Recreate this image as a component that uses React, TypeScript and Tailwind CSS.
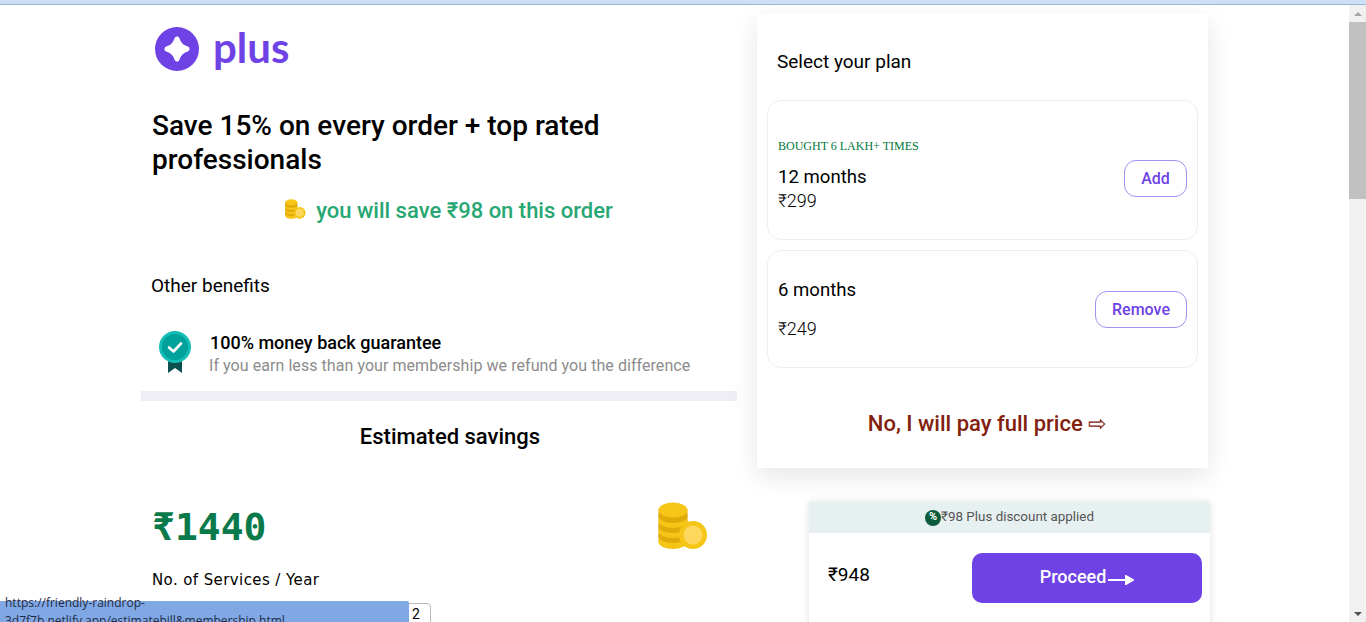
import type { ReactNode } from "react"

function Coins({ className }: { className: string }) {
  return (
    <svg viewBox="0 0 50 50" className={className}>
      <rect x="0.5" y="8" width="29" height="32" fill="#e0aa08" />
      <ellipse cx="15" cy="40" rx="14.5" ry="7" fill="#f5c518" />
      <ellipse cx="15" cy="34" rx="14.5" ry="7" fill="#e0aa08" />
      <ellipse cx="15" cy="29" rx="14.5" ry="7" fill="#f5c518" />
      <ellipse cx="15" cy="24" rx="14.5" ry="7" fill="#e0aa08" />
      <ellipse cx="15" cy="19" rx="14.5" ry="7" fill="#f5c518" />
      <ellipse cx="15" cy="14" rx="14.5" ry="7" fill="#e0aa08" />
      <ellipse cx="15" cy="8" rx="14.5" ry="7.5" fill="#f5c518" />
      <circle cx="35" cy="33" r="14" fill="#f5c518" />
      <circle cx="35" cy="33" r="9.5" fill="#fdd85d" />
    </svg>
  )
}

function Logo() {
  return (
    <svg viewBox="0 0 44 44" className="h-[44px] w-[44px]">
      <circle cx="22" cy="22" r="22" fill="#6e42e5" />
      <path
        d="M22 12 C23.5 17 27 20.5 32 22 C27 23.5 23.5 27 22 32 C20.500 27 17 23.500 12 22 C17 20.500 20.500 17 22 12 Z"
        fill="#fff"
        stroke="#fff"
        strokeWidth="5"
        strokeLinejoin="round"
      />
    </svg>
  )
}

function Badge() {
  return (
    <svg viewBox="0 0 32 44" className="h-[44px] w-[32px]">
      <path d="M9 26 H23 V42 L16 37 L9 42 Z" fill="#0b4f4f" />
      <circle cx="16" cy="16" r="16" fill="#14bdb5" />
      <circle cx="16" cy="16" r="13" fill="#00a19b" />
      <path d="M10 16.500 L14.500 20.500 L22 12.500" fill="none" stroke="#fff" strokeWidth="2.6" strokeLinecap="round" strokeLinejoin="round" />
    </svg>
  )
}

function PlanCard({ height, children }: { height: string; children: ReactNode }) {
  return (
    <div className={`flex items-center justify-between rounded-[14px] border border-[#eeeeee] px-[10px] ${height}`}>
      {children}
    </div>
  )
}

export default function App() {
  return (
    <div className="relative flex h-[622px] w-[1366px] flex-col overflow-hidden bg-white font-['Roboto',sans-serif] text-black">
      <div className="h-[5px] shrink-0 border-b border-[#9fb3d1] bg-[#cddff6]" />

      <div className="flex min-h-0 flex-1">
        <div className="flex-1 overflow-hidden pl-[141px]">
          <div className="flex gap-[20px]">
            {/* left column */}
            <div className="w-[596px]">
              <div className="flex items-center gap-[14px] pl-[14px] pt-[22px]">
                <Logo />
                <span className="-mt-[4px] font-['Lato',sans-serif] text-[42px] font-bold leading-[44px] text-[#6e42e5]">plus</span>
              </div>

              <h1 className="mt-[38px] w-[500px] pl-[11px] text-[28px] font-medium leading-[34px]">
                Save 15% on every order + top rated professionals
              </h1>

              <div className="mt-[19px] flex items-center justify-center pl-[20px]">
                <Coins className="mb-[4px] mr-[10px] h-[21px] w-[21px]" />
                <span className="text-[22px] font-medium leading-[30px] text-[#27a773]">you will save ₹98 on this order</span>
              </div>

              <h2 className="mt-[48px] pl-[10px] text-[19px] font-normal leading-[24px]">Other benefits</h2>

              <div className="mt-[33px] flex pl-[18px]">
                <Badge />
                <div className="ml-[19px]">
                  <p className="text-[18px] font-medium leading-[24px]">100% money back guarantee</p>
                  <p className="-ml-[1px] text-[16px] leading-[22px] tracking-[0.06px] text-[#8c8c8c]">
                    If you earn less than your membership we refund you the difference
                  </p>
                </div>
              </div>

              <div className="mt-[14px] h-[10px] bg-[#eeeef4]" />

              <h2 className="mt-[22px] pl-[22px] text-center text-[22px] font-medium leading-[28px]">Estimated savings</h2>

              <div className="mt-[51px] flex items-center justify-between pl-[11px] pr-[29px]">
                <span className="font-['DejaVu_Sans_Mono',monospace] text-[38px] font-bold leading-[48px] text-[#0b7a4b]">₹1440</span>
                <Coins className="h-[50px] w-[50px]" />
              </div>

              <p className="mt-[18px] pl-[11px] font-['DejaVu_Sans',sans-serif] text-[15px] leading-[20px] tracking-[0.4px]">No. of Services / Year</p>

              <div className="ml-[150px] mt-[13px] h-[24px] w-[140px] rounded-[4px] border border-[#bbbbbb] pl-[120px] text-[14px]">2</div>
            </div>

            {/* right column */}
            <div className="w-[453px]">
              <div className="mt-[9px] h-[454px] w-[451px] bg-white px-[10px] shadow-[0_8px_24px_rgba(0,0,0,0.10)]">
                <h2 className="pl-[10px] pt-[35px] text-[19px] leading-[26px]">Select your plan</h2>

                <div className="mt-[25px] flex flex-col gap-[10px]">
                  <PlanCard height="h-[140px]">
                    <div className="pt-[9px]">
                      <p className="pt-[2px] font-['Liberation_Serif',serif] text-[12px] leading-[14px] text-[#007a3c]">BOUGHT 6 LAKH+ TIMES</p>
                      <p className="mt-[12px] text-[18.6px] leading-[24px]">12 months</p>
                      <p className="text-[18px] font-light leading-[24px]">₹299</p>
                    </div>
                    <button className="mt-[17px] h-[37px] w-[63px] rounded-[12px] border border-[#a78fee] text-[16px] font-medium text-[#6e42e5]">Add</button>
                  </PlanCard>
                  <PlanCard height="h-[118px]">
                    <div>
                      <p className="text-[18.6px] leading-[24px]">6 months</p>
                      <p className="mt-[15px] text-[18px] font-light leading-[24px]">₹249</p>
                    </div>
                    <button className="h-[37px] w-[92px] rounded-[12px] border border-[#a78fee] pt-[1px] text-[16px] font-medium text-[#6e42e5]">Remove</button>
                  </PlanCard>
                </div>

                <p className="mt-[41px] pl-[9px] text-center text-[22px] font-medium leading-[30px] text-[#82200e]">No, I will pay full price ⇨</p>
              </div>

              <div className="ml-[52px] mt-[34px] w-[401px] bg-white shadow-[0_0_8px_rgba(0,0,0,0.12)]">
                <div className="flex h-[31px] items-center justify-center bg-[#e6f0f0] text-[13.4px] text-[#555555]">
                  <span className="flex h-[16px] w-[16px] items-center justify-center rounded-full bg-[#0b5c3c] text-[11px] font-bold text-white">%</span>
                  ₹98 Plus discount applied
                </div>
                <div className="flex h-[200px] justify-between pl-[19px] pr-[8px] pt-[20px]">
                  <span className="pt-[10px] text-[19px] leading-[24px]">₹948</span>
                  <button className="flex h-[50px] w-[230px] items-center justify-center rounded-[10px] bg-[#6e42e5] pb-[4px] text-[18px] font-medium text-white">
                    Proceed
                    <svg viewBox="0 0 26 10" className="ml-[2px] mt-[7px] h-[10px] w-[26px]">
                      <path d="M0 5 H19 M18 1 L25 5 L18 9 Z" stroke="#fff" strokeWidth="2" fill="#fff" />
                    </svg>
                  </button>
                </div>
              </div>
            </div>
          </div>
        </div>

        {/* browser scrollbar */}
        <div className="flex w-[17px] shrink-0 flex-col bg-[#f1f1f1]">
          <div className="flex h-[17px] shrink-0 items-center justify-center">
            <div className="h-0 w-0 border-x-[4px] border-b-[4px] border-x-transparent border-b-[#a3a3a3]" />
          </div>
          <div className="h-[177px] bg-[#c1c1c1]" />
          <div className="flex-1" />
          <div className="flex h-[17px] shrink-0 items-center justify-center">
            <div className="h-0 w-0 border-x-[4px] border-t-[4px] border-x-transparent border-t-[#505050]" />
          </div>
        </div>
      </div>

      {/* link preview over the page */}
      <div className="absolute bottom-0 left-0 flex h-[21px] w-[409px] items-center rounded-tr-[2px] bg-[#80a8e4] pl-[5px] font-['Open_Sans',sans-serif] text-[12px] text-[#1f2a44]">
        https://friendly-raindrop-3d7f7b.netlify.app/estimatebill&amp;membership.html
      </div>
    </div>
  )
}
